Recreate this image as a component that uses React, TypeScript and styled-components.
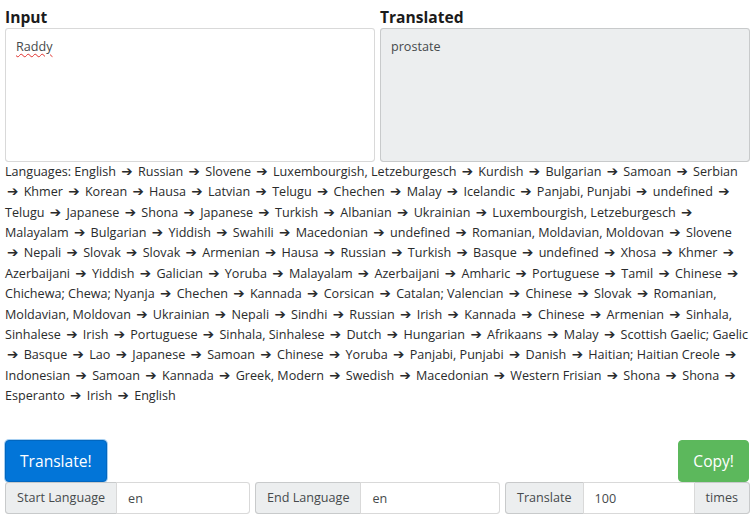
import React from 'react';
import styled, { createGlobalStyle } from 'styled-components';

const GlobalStyle = createGlobalStyle`
  html, body {
    margin: 0;
    padding: 0;
    background: #fff;
  }
  body {
    font-family: 'Open Sans', 'Noto Sans', 'DejaVu Sans', sans-serif;
    font-size: 12.6px;
    line-height: 20.36px;
    color: #292b2c;
  }
  * {
    box-sizing: border-box;
  }
`;

const Page = styled.div`
  padding: 5px;
`;

const Panels = styled.div`
  display: grid;
  grid-template-columns: minmax(0, 1fr) minmax(0, 1fr);
  column-gap: 5px;
`;

const Panel = styled.div`
  display: flex;
  flex-direction: column;
`;

const Heading = styled.h5`
  margin: 2px 0 1px;
  font-size: 15.6px;
  line-height: 20px;
  font-weight: 700;
  color: #1b1b1b;
`;

const TextBox = styled.div<{ readOnly?: boolean }>`
  height: 134px;
  padding: 9px 10px;
  line-height: 17px;
  color: #464a4c;
  background: ${(p) => (p.readOnly ? '#eceeef' : '#fff')};
  border: 1px solid rgba(0, 0, 0, 0.15);
  border-radius: 3.4px;
  outline: none;
  overflow: auto;
`;

const Misspelled = styled.span`
  text-decoration: underline wavy #e0312e;
  text-decoration-thickness: 1px;
  text-underline-offset: 2px;
`;

const Languages = styled.p`
  margin: 0;
`;

const Arrow = styled.span`
  display: inline-block;
  padding: 0 2px;
  font-family: 'DejaVu Sans', sans-serif;
  font-size: 13.57px;
  line-height: 14px;
`;

const ButtonRow = styled.div`
  display: flex;
  justify-content: space-between;
  align-items: flex-end;
  margin-top: 34px;
  padding-right: 1px;
  height: 42px;
`;

const Button = styled.button<{ variant: 'primary' | 'success' }>`
  font-family: inherit;
  font-size: 15.6px;
  line-height: 21px;
  padding: 9.5px 14px;
  border-radius: 4px;
  color: #fff;
  cursor: pointer;
  background: ${(p) => (p.variant === 'primary' ? '#0275d8' : '#5cb85c')};
  border: 1px solid ${(p) => (p.variant === 'primary' ? '#0267bf' : '#5cb85c')};
  box-shadow: ${(p) => (p.variant === 'primary' ? '0 0 0 1px rgba(2, 117, 216, 0.35)' : 'none')};
`;

const Groups = styled.div`
  display: grid;
  grid-template-columns: repeat(3, minmax(0, 1fr));
  column-gap: 5px;
`;

const InputGroup = styled.div`
  display: flex;
  height: 32px;
`;

const Addon = styled.span`
  display: flex;
  align-items: center;
  flex: none;
  padding: 0 11px;
  white-space: nowrap;
  color: #464a4c;
  background: #eceeef;
  border: 1px solid rgba(0, 0, 0, 0.15);
  &:first-child {
    border-radius: 3.4px 0 0 3.4px;
    border-right: 0;
  }
  &:last-child {
    border-radius: 0 3.4px 3.4px 0;
    border-left: 0;
  }
`;

const Field = styled.input`
  flex: 1 1 0;
  width: 100%;
  min-width: 0;
  font-family: inherit;
  font-size: 12.6px;
  padding: 0 11px;
  color: #464a4c;
  background: #fff;
  border: 1px solid rgba(0, 0, 0, 0.15);
  border-radius: 0;
  outline: none;
  &:last-child {
    border-radius: 0 3.4px 3.4px 0;
  }
`;

const chain = [
  'English', 'Russian', 'Slovene', 'Luxembourgish, Letzeburgesch', 'Kurdish', 'Bulgarian', 'Samoan', 'Serbian',
  'Khmer', 'Korean', 'Hausa', 'Latvian', 'Telugu', 'Chechen', 'Malay', 'Icelandic', 'Panjabi, Punjabi', 'undefined',
  'Telugu', 'Japanese', 'Shona', 'Japanese', 'Turkish', 'Albanian', 'Ukrainian', 'Luxembourgish, Letzeburgesch',
  'Malayalam', 'Bulgarian', 'Yiddish', 'Swahili', 'Macedonian', 'undefined', 'Romanian, Moldavian, Moldovan', 'Slovene',
  'Nepali', 'Slovak', 'Slovak', 'Armenian', 'Hausa', 'Russian', 'Turkish', 'Basque', 'undefined', 'Xhosa', 'Khmer',
  'Azerbaijani', 'Yiddish', 'Galician', 'Yoruba', 'Malayalam', 'Azerbaijani', 'Amharic', 'Portuguese', 'Tamil', 'Chinese',
  'Chichewa; Chewa; Nyanja', 'Chechen', 'Kannada', 'Corsican', 'Catalan; Valencian', 'Chinese', 'Slovak', 'Romanian, Moldavian, Moldovan',
  'Ukrainian', 'Nepali', 'Sindhi', 'Russian', 'Irish', 'Kannada', 'Chinese', 'Armenian', 'Sinhala, Sinhalese',
  'Irish', 'Portuguese', 'Sinhala, Sinhalese', 'Dutch', 'Hungarian', 'Afrikaans', 'Malay', 'Scottish Gaelic; Gaelic',
  'Basque', 'Lao', 'Japanese', 'Samoan', 'Chinese', 'Yoruba', 'Panjabi, Punjabi', 'Danish', 'Haitian; Haitian Creole',
  'Indonesian', 'Samoan', 'Kannada', 'Greek, Modern', 'Swedish', 'Macedonian', 'Western Frisian', 'Shona', 'Shona',
  'Esperanto', 'Irish', 'English',
];

const App = () => {
  return (
    <>
      <GlobalStyle />
      <Page>
        <Panels>
          <Panel>
            <Heading>Input</Heading>
            <TextBox contentEditable suppressContentEditableWarning role="textbox">
              <Misspelled>Raddy</Misspelled>
            </TextBox>
          </Panel>
          <Panel>
            <Heading>Translated</Heading>
            <TextBox readOnly role="textbox">
              prostate
            </TextBox>
          </Panel>
        </Panels>
        <Languages>
          {`Languages: ${chain[0]} `}
          {chain.slice(1).map((lang, i) => (
            <React.Fragment key={i}>
              <Arrow>➔</Arrow>
              {i < chain.length - 2 ? ` ${lang} ` : ` ${lang}`}
            </React.Fragment>
          ))}
        </Languages>
        <ButtonRow>
          <Button variant="primary">Translate!</Button>
          <Button variant="success">Copy!</Button>
        </ButtonRow>
        <Groups>
          <InputGroup>
            <Addon>Start Language</Addon>
            <Field defaultValue="en" />
          </InputGroup>
          <InputGroup>
            <Addon>End Language</Addon>
            <Field defaultValue="en" />
          </InputGroup>
          <InputGroup>
            <Addon>Translate</Addon>
            <Field defaultValue="100" />
            <Addon>times</Addon>
          </InputGroup>
        </Groups>
      </Page>
    </>
  );
};

export default App;
